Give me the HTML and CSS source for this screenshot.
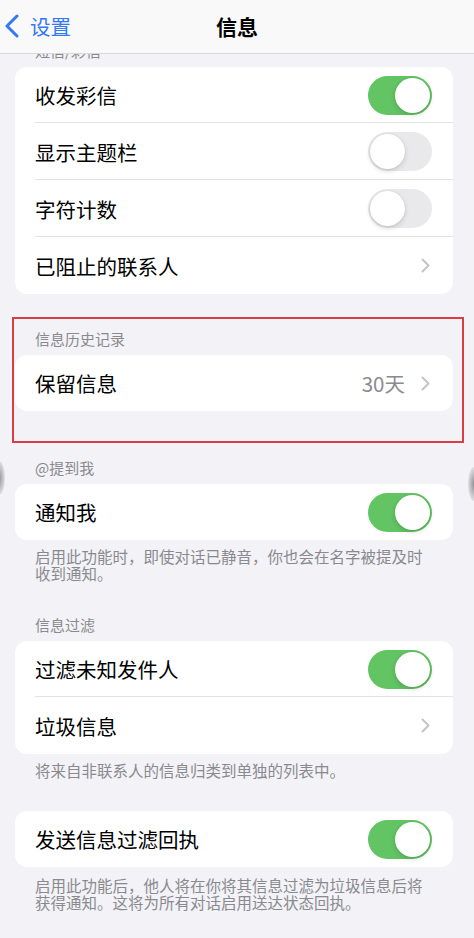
FILE: index.html
```html
<!DOCTYPE html>
<html lang="zh-CN">
<head>
<meta charset="utf-8">
<title>信息</title>
<link rel="stylesheet" href="styles.css">
</head>
<body>
<div class="screen">
  <header class="nav">
    <div class="nav-back">
      <svg class="back-chev" width="16" height="24" viewBox="0 0 16 24"><path d="M13 2 L3 12 L13 22" fill="none" stroke="#3478f6" stroke-width="3" stroke-linecap="round" stroke-linejoin="round"/></svg>
      <span class="back-label">设置</span>
    </div>
    <div class="nav-title">信息</div>
  </header>

  <main class="content">
    <div class="peek"><span>短信/彩信</span></div>
    <div class="card">
      <div class="row"><span class="label">收发彩信</span><span class="toggle on"><span class="knob"></span></span></div>
      <div class="row"><span class="label">显示主题栏</span><span class="toggle"><span class="knob"></span></span></div>
      <div class="row"><span class="label">字符计数</span><span class="toggle"><span class="knob"></span></span></div>
      <div class="row link"><span class="label">已阻止的联系人</span><span class="chev"><svg width="9" height="15" viewBox="0 0 9 15"><path d="M1.5 1.5 L7.5 7.5 L1.5 13.5" fill="none" stroke="#c4c4c7" stroke-width="2" stroke-linecap="round" stroke-linejoin="round"/></svg></span></div>
    </div>

    <section class="redbox">
      <div class="sec-head first">信息历史记录</div>
      <div class="card">
        <div class="row link"><span class="label">保留信息</span><span class="trail"><span class="value">30天</span><span class="chev"><svg width="9" height="15" viewBox="0 0 9 15"><path d="M1.5 1.5 L7.5 7.5 L1.5 13.5" fill="none" stroke="#c4c4c7" stroke-width="2" stroke-linecap="round" stroke-linejoin="round"/></svg></span></span></div>
      </div>
    </section>

    <div class="sec-head s3">@提到我</div>
    <div class="card">
      <div class="row"><span class="label">通知我</span><span class="toggle on"><span class="knob"></span></span></div>
    </div>
    <div class="sec-foot">启用此功能时，即使对话已静音，你也会在名字被提及时收到通知。</div>

    <div class="sec-head s4">信息过滤</div>
    <div class="card">
      <div class="row"><span class="label">过滤未知发件人</span><span class="toggle on"><span class="knob"></span></span></div>
      <div class="row link"><span class="label">垃圾信息</span><span class="chev"><svg width="9" height="15" viewBox="0 0 9 15"><path d="M1.5 1.5 L7.5 7.5 L1.5 13.5" fill="none" stroke="#c4c4c7" stroke-width="2" stroke-linecap="round" stroke-linejoin="round"/></svg></span></div>
    </div>
    <div class="sec-foot">将来自非联系人的信息归类到单独的列表中。</div>

    <div class="card s5">
      <div class="row"><span class="label">发送信息过滤回执</span><span class="toggle on"><span class="knob"></span></span></div>
    </div>
    <div class="sec-foot f5">启用此功能后，他人将在你将其信息过滤为垃圾信息后将获得通知。这将为所有对话启用送达状态回执。</div>
  </main>

  <div class="edge edge-left"></div>
  <div class="edge edge-right"></div>
</div>
</body>
</html>
```

FILE: styles.css
```css
* { box-sizing: border-box; }
html, body { margin: 0; padding: 0; }
body {
  background: #f2f2f7;
  font-family: "Noto Sans CJK SC", "Noto Sans", "Liberation Sans", sans-serif;
  color: #000;
}
.screen {
  position: relative;
  width: 474px;
  height: 938px;
  overflow: hidden;
  background: #f2f2f7;
}
.nav {
  height: 54px;
  background: #f9f9f9;
  border-bottom: 1px solid #d9d9dc;
  display: grid;
  grid-template-columns: 1fr auto 1fr;
  align-items: center;
}
.nav-back {
  display: flex;
  align-items: center;
  padding-left: 4px;
  gap: 10px;
  padding-bottom: 2px;
}
.back-chev { display: block; }
.back-label {
  font-size: 20.5px;
  color: #3478f6;
  line-height: 24px;
}
.nav-title {
  font-size: 21px;
  font-weight: 700;
  line-height: 24px;
  padding-bottom: 2px;
}
.content {
  padding: 0 21px 0 15px;
}
.peek {
  height: 13px;
  overflow: hidden;
  padding-left: 20px;
}
.peek span {
  display: block;
  margin-top: -12px;
  font-size: 15px;
  line-height: 18px;
  color: #8a8a8e;
}
.card {
  background: #fff;
  border-radius: 12px;
  overflow: hidden;
}
.row {
  height: 57px;
  display: flex;
  align-items: center;
  justify-content: space-between;
  padding: 0 21px 0 20px;
  position: relative;
}
.row + .row { height: 57px; }
.row:not(:last-child)::after {
  content: "";
  position: absolute;
  left: 20px;
  right: 0;
  bottom: 0;
  height: 1px;
  background: #e3e3e6;
}
.card .row:first-child { height: 56px; }
.card .row:only-child { height: 56px; }
.label {
  font-size: 20.5px;
  line-height: 26px;
  letter-spacing: 0;
}
.row.link { padding-right: 23px; }
.trail {
  display: flex;
  align-items: center;
  gap: 16px;
}
.value {
  font-size: 20.5px;
  color: #8a8a8e;
  line-height: 26px;
}
.chev { display: flex; align-items: center; }
.chev svg { display: block; }
.toggle {
  width: 64px;
  height: 39px;
  border-radius: 20px;
  background: #e9e9eb;
  position: relative;
  flex: none;
}
.toggle .knob {
  position: absolute;
  top: 2px;
  left: 2px;
  width: 35px;
  height: 35px;
  border-radius: 50%;
  background: #fff;
  box-shadow: 0 2px 5px rgba(0,0,0,0.16), 0 0 1px rgba(0,0,0,0.12);
}
.toggle.on { background: #62c462; }
.toggle.on .knob { left: 27px; }

.redbox {
  margin: 23px -11px 0 -3px;
  border: 2px solid #dc3d44;
  padding: 0 9px 30px 1px;
}
.sec-head {
  font-size: 15px;
  line-height: 18px;
  color: #8a8a8e;
  padding: 0 20px 7px;
}
.sec-head.first { padding-top: 11px; }
.sec-head.s3 { margin-top: 16px; }
.sec-head.s4 { margin-top: 34px; }
.sec-foot {
  font-size: 15.5px;
  line-height: 17px;
  color: #8a8a8e;
  padding: 8px 20px 0;
}
.sec-foot.f5 { padding-top: 10px; }
.card.s5 { margin-top: 32px; }

.edge {
  position: absolute;
  width: 12px;
  height: 34px;
  border-radius: 50%;
  background: radial-gradient(ellipse at center, rgba(110,110,115,0.75), rgba(150,150,155,0.2) 70%, rgba(150,150,155,0) 100%);
}
.edge-left { left: -7px; top: 461px; }
.edge-right { right: -6px; top: 467px; }
```
